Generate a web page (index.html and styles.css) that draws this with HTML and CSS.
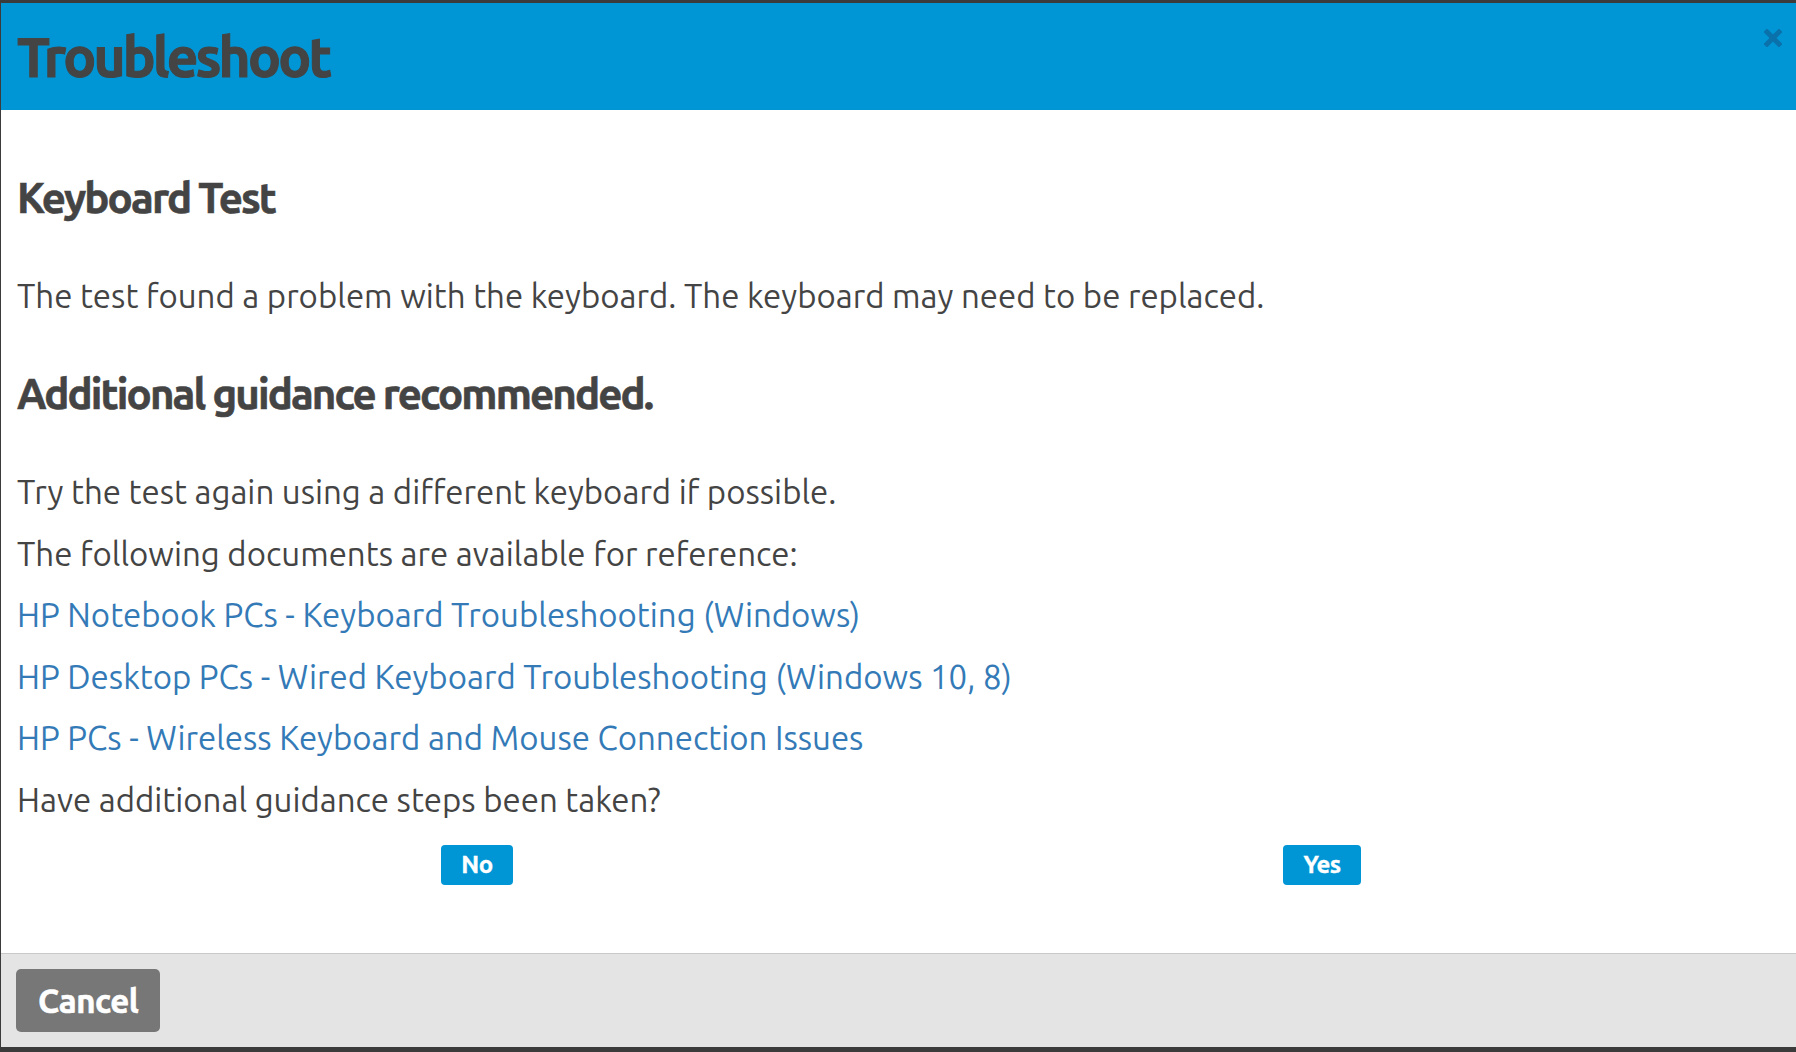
FILE: index.html
```html
<!DOCTYPE html>
<html lang="en">
<head>
<meta charset="utf-8">
<title>Troubleshoot</title>
<link rel="stylesheet" href="styles.css">
</head>
<body>
<div class="modal">
  <header class="modal-header">
    <h1 class="modal-title">Troubleshoot</h1>
    <button class="close" aria-label="Close">
      <svg width="18" height="18" viewBox="0 0 18 18"><path d="M3 3 L15 15 M15 3 L3 15" stroke="currentColor" stroke-width="5" stroke-linecap="square"/></svg>
    </button>
  </header>
  <main class="modal-body">
    <h2 class="section-title">Keyboard Test</h2>
    <p class="result">The test found a problem with the keyboard. The keyboard may need to be replaced.</p>
    <h2 class="section-title">Additional guidance recommended.</h2>
    <p class="line">Try the test again using a different keyboard if possible.</p>
    <p class="line">The following documents are available for reference:</p>
    <p class="line"><a class="doc-link" href="#">HP Notebook PCs - Keyboard Troubleshooting (Windows)</a></p>
    <p class="line"><a class="doc-link" href="#">HP Desktop PCs - Wired Keyboard Troubleshooting (Windows 10, 8)</a></p>
    <p class="line"><a class="doc-link" href="#">HP PCs - Wireless Keyboard and Mouse Connection Issues</a></p>
    <p class="line">Have additional guidance steps been taken?</p>
    <div class="answer-row">
      <div class="answer-col"><button class="btn-answer">No</button></div>
      <div class="answer-col"><button class="btn-answer">Yes</button></div>
    </div>
  </main>
  <footer class="modal-footer">
    <button class="btn-cancel">Cancel</button>
  </footer>
</div>
</body>
</html>
```
FILE: styles.css
```css
html, body {
  margin: 0;
  padding: 0;
  height: 100%;
}
body {
  background: #3b3b3b;
  font-family: "Ubuntu", "Liberation Sans", sans-serif;
  color: #444444;
  overflow: hidden;
}
.modal {
  margin: 3px 0 0 1px;
  height: 1044px;
  display: flex;
  flex-direction: column;
  background: #ffffff;
}
.modal-header {
  position: relative;
  height: 107px;
  box-sizing: border-box;
  padding: 24px 16px 0 16px;
  background: #0096d6;
  flex: none;
}
.modal-title {
  margin: 0;
  font-size: 55px;
  line-height: 59px;
  font-weight: 700;
  letter-spacing: -2.85px;
  color: #444444;
  -webkit-text-stroke: 1px #444444;
}
.close {
  position: absolute;
  top: 26px;
  right: 14px;
  padding: 0;
  border: 0;
  background: none;
  color: #0c70a8;
  line-height: 0;
  opacity: 0.95;
}
.modal-body {
  flex: 1;
  box-sizing: border-box;
  padding: 65px 16px 0 16px;
}
.section-title {
  margin: 0 0 51px 0;
  font-size: 42px;
  line-height: 46px;
  font-weight: 700;
  letter-spacing: -1.9px;
  color: #444444;
  -webkit-text-stroke: 0.6px #444444;
}
.result {
  margin: 0 0 52px 0;
  font-size: 33px;
  line-height: 47px;
}
.line {
  margin: 0 0 14.6px 0;
  font-size: 33px;
  line-height: 47px;
}
.doc-link {
  color: #337ab7;
  text-decoration: none;
}
.answer-row {
  display: grid;
  grid-template-columns: 1fr 1fr;
  padding: 0 35.5px 0 37.5px;
  margin-top: 22px;
}
.answer-col {
  display: flex;
  justify-content: center;
}
.btn-answer {
  height: 40px;
  padding: 0 20px;
  border: 0;
  border-radius: 4px;
  background: #0096d6;
  color: #ffffff;
  font-family: "Ubuntu", "Liberation Sans", sans-serif;
  font-size: 24px;
  font-weight: 700;
  letter-spacing: -0.5px;
  -webkit-text-stroke: 0.4px #ffffff;
}
.modal-footer {
  flex: none;
  height: 94px;
  box-sizing: border-box;
  border-top: 1px solid #c9c9c9;
  background: #e4e4e4;
  padding: 15px 15px 0 15px;
}
.btn-cancel {
  height: 63px;
  padding: 0 22px;
  border: 0;
  border-radius: 5px;
  background: #777777;
  color: #ffffff;
  font-family: "Ubuntu", "Liberation Sans", sans-serif;
  font-size: 33px;
  font-weight: 700;
  letter-spacing: -0.5px;
  -webkit-text-stroke: 0.6px #ffffff;
}
```
